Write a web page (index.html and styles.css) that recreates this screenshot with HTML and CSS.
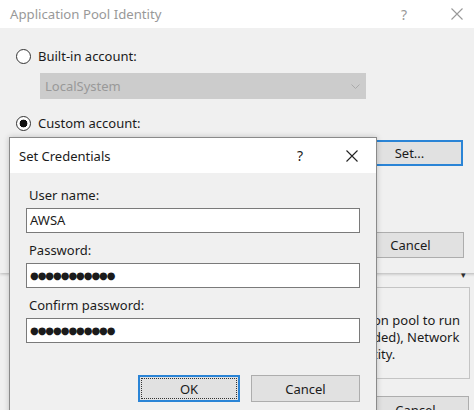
FILE: index.html
```html
<!DOCTYPE html>
<html lang="en">
<head>
    <meta charset="UTF-8">
    <title>Set Credentials</title>
    <link rel="stylesheet" href="styles.css">
</head>
<body>
<div class="screen">

    <!-- window behind everything: advanced settings -->
    <section class="window settings">
        <div class="grid-row">
            <span class="grid-arrow">&#9662;</span>
        </div>
        <div class="description">
            <div>on pool to run</div>
            <div>ded), Network</div>
            <div>tity.</div>
        </div>
        <div class="settings-actions">
            <button class="btn">Cancel</button>
        </div>
    </section>

    <!-- application pool identity dialog -->
    <section class="window pool">
        <header class="titlebar inactive">
            <span class="title">Application Pool Identity</span>
            <span class="help">?</span>
            <span class="close">
                <svg width="12" height="12" viewBox="0 0 12 12"><path d="M0.5 0.5L11.5 11.5M11.5 0.5L0.5 11.5"/></svg>
            </span>
        </header>
        <div class="pool-body">
            <label class="option"><input type="radio" name="identity"> Built-in account:</label>
            <div class="select disabled">
                <span>LocalSystem</span>
                <svg width="9" height="5" viewBox="0 0 9 5"><path d="M0.5 0.5L4.5 4.5L8.5 0.5"/></svg>
            </div>
            <label class="option"><input type="radio" name="identity" checked> Custom account:</label>
            <div class="custom-row">
                <input class="textbox" type="text" value="AWSA" readonly>
                <button class="btn default">Set...</button>
            </div>
            <div class="pool-actions">
                <button class="btn">OK</button>
                <button class="btn">Cancel</button>
            </div>
        </div>
    </section>

    <!-- set credentials dialog -->
    <section class="window credentials">
        <header class="titlebar">
            <span class="title">Set Credentials</span>
            <span class="help">?</span>
            <span class="close">
                <svg width="12" height="12" viewBox="0 0 12 12"><path d="M0.5 0.5L11.5 11.5M11.5 0.5L0.5 11.5"/></svg>
            </span>
        </header>
        <form class="cred-body">
            <label for="user">User name:</label>
            <div class="field" id="user">AWSA</div>

            <label for="pass">Password:</label>
            <div class="field dots" id="pass">&#9679;&#9679;&#9679;&#9679;&#9679;&#9679;&#9679;&#9679;&#9679;&#9679;&#9679;</div>

            <label for="confirm">Confirm password:</label>
            <div class="field dots" id="confirm">&#9679;&#9679;&#9679;&#9679;&#9679;&#9679;&#9679;&#9679;&#9679;&#9679;&#9679;</div>

            <div class="cred-actions">
                <button type="button" class="btn default focus ok">OK</button>
                <button type="button" class="btn cancel">Cancel</button>
            </div>
        </form>
    </section>

</div>
</body>
</html>
```

FILE: styles.css
```css
body {
    margin: 0;
    font-family: "Noto Sans", "Liberation Sans", sans-serif;
    font-size: 13px;
    color: #1b1b1b;
}
.screen {
    position: relative;
    width: 474px;
    height: 410px;
    overflow: hidden;
    background-color: #f0f0f0;
}
.window {
    position: absolute;
    box-sizing: border-box;
    background-color: #f0f0f0;
}

/* title bars */
.titlebar {
    display: flex;
    align-items: center;
    background-color: #fff;
}
.titlebar .title {
    flex: 1;
}
.titlebar .help {
    width: 46px;
    text-align: center;
    font-size: 14px;
}
.titlebar .close {
    width: 46px;
    display: flex;
    justify-content: center;
}
.titlebar .close path {
    stroke: #222;
    stroke-width: 1.1;
    fill: none;
}
.titlebar.inactive {
    color: #999;
}
.titlebar.inactive .close path {
    stroke: #999;
}

/* buttons */
.btn {
    box-sizing: border-box;
    height: 27px;
    padding: 0;
    font-family: inherit;
    font-size: 13px;
    color: #1b1b1b;
    background-color: #e1e1e1;
    border: 1px solid #adadad;
}
.btn.default {
    border: 2px solid #2a84d6;
}
.btn.focus {
    outline: 1px dotted #333;
    outline-offset: -4px;
}

/* application pool identity */
.pool {
    left: 0;
    top: 0;
    width: 480px;
    height: 273px;
    z-index: 2;
    box-shadow: 0 1px 3px rgba(0, 0, 0, 0.25);
}
.pool .titlebar {
    height: 28px;
    padding-left: 10px;
    font-size: 13.2px;
}
.pool .titlebar .help {
    margin-right: 7px;
}
.pool-body {
    display: flex;
    flex-direction: column;
    padding-left: 16px;
}
.option {
    display: flex;
    align-items: center;
    gap: 7px;
    height: 20px;
    margin-top: 18px;
    font-size: 13px;
}
.option input {
    appearance: none;
    box-sizing: border-box;
    width: 15px;
    height: 15px;
    margin: 0;
    border: 1px solid #333;
    border-radius: 50%;
    background: #fff;
}
.option input:checked {
    background: radial-gradient(circle, #111 0 3.6px, #fff 4.2px);
}
.select {
    box-sizing: border-box;
    display: flex;
    align-items: center;
    justify-content: space-between;
    width: 326px;
    height: 26px;
    margin: 7px 0 0 24px;
    padding: 0 6px 0 5px;
    background-color: #cccccc;
    color: #999;
    font-size: 13px;
}
.select path {
    stroke: #aaa;
    fill: none;
}
.option + .custom-row {
    margin-top: 7px;
}
.select + .option {
    margin-top: 14px;
}
.custom-row {
    display: flex;
    gap: 10px;
}
.textbox {
    box-sizing: border-box;
    width: 306px;
    height: 26px;
    margin-left: 24px;
    border: 1px solid #7a7a7a;
}
.custom-row .btn {
    width: 107px;
    height: 26px;
}
.pool-actions {
    display: flex;
    justify-content: flex-end;
    gap: 10px;
    margin-top: 66px;
    padding-right: 16px;
}
.pool-actions .btn {
    width: 107px;
    height: 26px;
}

/* advanced settings window behind */
.settings {
    left: 0;
    top: 250px;
    width: 480px;
    height: 200px;
    z-index: 1;
}
.grid-row {
    display: flex;
    justify-content: flex-end;
    height: 30px;
    padding: 18px 14px 0 0;
    box-sizing: border-box;
    font-size: 9px;
    color: #333;
}
.description {
    box-sizing: border-box;
    width: 180px;
    height: 92px;
    margin: 7px 0 0 290px;
    padding: 24px 0 0 82px;
    border: 1px solid #c4c4c4;
    font-size: 13px;
    line-height: 17px;
    white-space: nowrap;
}
.settings-actions {
    display: flex;
    justify-content: flex-end;
    margin-top: 17px;
    padding-right: 11px;
}
.settings-actions .btn {
    width: 107px;
}

/* set credentials dialog */
.credentials {
    left: 9px;
    top: 137px;
    width: 368px;
    height: 300px;
    z-index: 3;
    border: 1px solid #8a8a8a;
    box-shadow: 0 0 6px rgba(0, 0, 0, 0.2);
}
.credentials .titlebar {
    height: 35px;
    padding-left: 9px;
    font-size: 13px;
}
.credentials .titlebar .help {
    margin-right: 6px;
}
.credentials .titlebar .close {
    margin-right: 1px;
}
.cred-body {
    display: flex;
    flex-direction: column;
    padding: 13px 16px 0;
    margin: 0;
}
.cred-body label {
    height: 18px;
    line-height: 18px;
    margin-top: 8px;
    padding-left: 3px;
    font-size: 13px;
}
.cred-body label:first-child {
    margin-top: 0;
}
.field {
    box-sizing: border-box;
    height: 25px;
    margin-top: 4px;
    padding-left: 3px;
    line-height: 23px;
    background-color: #fff;
    border: 1px solid #7a7a7a;
    font-size: 13px;
}
.field.dots {
    font-family: "DejaVu Sans", sans-serif;
    font-size: 10px;
    letter-spacing: -1.05px;
}
.cred-actions {
    display: flex;
    justify-content: flex-end;
    gap: 11px;
    margin-top: 32px;
}
.cred-actions .ok {
    width: 102px;
}
.cred-actions .cancel {
    width: 109px;
}
```
